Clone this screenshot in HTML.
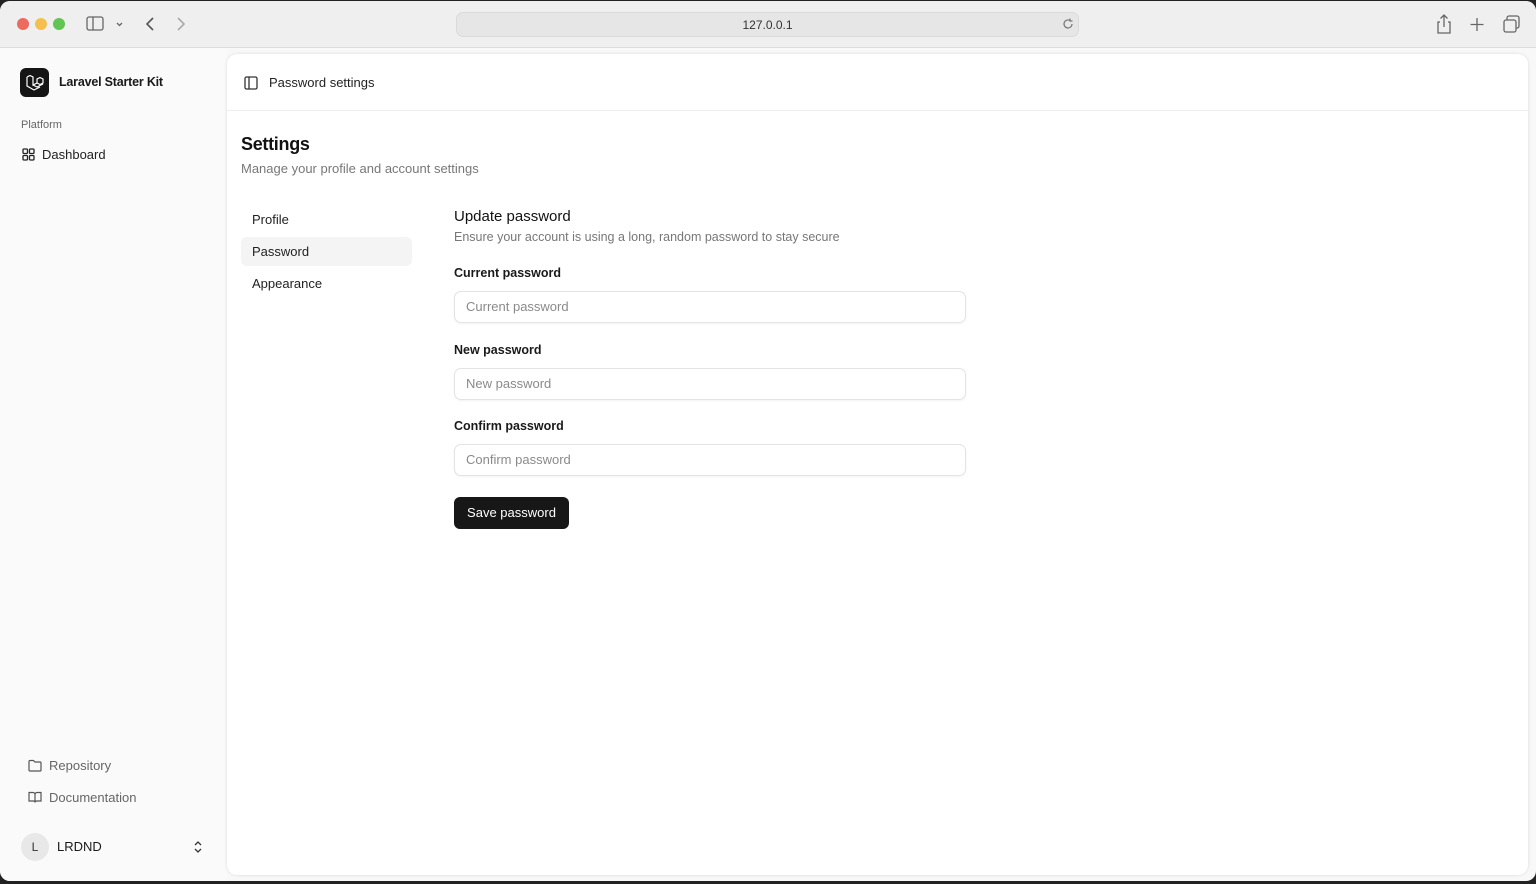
<!DOCTYPE html>
<html><head><style>
*{box-sizing:border-box;margin:0;padding:0}
body{width:1536px;height:884px;background:#222;font-family:"Liberation Sans",sans-serif;overflow:hidden;position:relative}
.win{position:absolute;left:0;top:1px;width:1536px;height:880px;background:#f8f8f8;border-radius:10px;overflow:hidden}
.chrome{position:absolute;left:0;top:0;width:100%;height:47px;background:#efefef;border-bottom:1px solid #dcdcdc}
.dot{position:absolute;top:17px;width:12px;height:12px;border-radius:50%}
.url{position:absolute;left:456px;top:11px;width:623px;height:25px;background:#e6e6e6;border:1px solid #dadada;border-radius:7px;text-align:center;font-size:12px;line-height:24px;color:#333}
.side{position:absolute;left:0;top:47px;width:227px;bottom:0;background:#fafafa}
.main{position:absolute;left:227px;top:53px;width:1301px;height:821px;background:#fff;border-radius:10px;box-shadow:0 0 3px rgba(0,0,0,.12)}
.t{position:absolute;white-space:nowrap}
.inp{position:absolute;left:227px;width:512px;height:32px;border:1px solid #e3e3e3;border-radius:7px;box-shadow:0 1px 2px rgba(0,0,0,.05);font-size:13px;color:#8a8a8a;padding-left:11px;line-height:30px}
.lbl{position:absolute;left:227px;font-size:12.5px;font-weight:bold;color:#1a1a1a}
</style></head><body>
<div class="win">
<div class="chrome">
<div class="dot" style="left:17px;background:#ed6a5e"></div>
<div class="dot" style="left:35px;background:#f5bf4f"></div>
<div class="dot" style="left:53px;background:#61c554"></div>
<svg style="position:absolute;left:86px;top:15px" width="40" height="16" fill="none" stroke="#666" stroke-width="1.3"><rect x="1" y="1" width="16" height="13" rx="2"/><line x1="7" y1="1" x2="7" y2="14"/><path d="M31 7l2.5 2.5L36 7"/></svg>
<svg style="position:absolute;left:143px;top:15px" width="45" height="16" fill="none" stroke="#555" stroke-width="1.6"><path d="M10 2L4 8l6 6"/><path d="M35 2l6 6-6 6" stroke="#aaa"/></svg>
<div class="url">127.0.0.1</div>
<svg style="position:absolute;left:1061px;top:16px" width="14" height="14" fill="none" stroke="#777" stroke-width="1.2"><path d="M11 7a4 4 0 1 1-2-3.5M9 1.5v2.5h2.5"/></svg>
<svg style="position:absolute;left:1435px;top:12px" width="90" height="22" fill="none" stroke="#666" stroke-width="1.3"><path d="M5 9H3v11h12V9h-2M9 14V2M5.5 5.5L9 2l3.5 3.5"/><path d="M42 5v13M35.5 11.5h13"/><rect x="69" y="7" width="12" height="12" rx="2"/><path d="M72 7V5a2 2 0 0 1 2-2h8a2 2 0 0 1 2 2v8a2 2 0 0 1-2 2h-1"/></svg>
</div>
<div class="side">
<div style="position:absolute;left:20px;top:20px;width:29px;height:29px;background:#151515;border-radius:6px"></div>
<svg style="position:absolute;left:25px;top:25px" width="19" height="19" fill="none" stroke="#fff" stroke-width="1.2"><path d="M2 4l3-1.5 3 1.5v8l4-2V6l3-1.5 3 1.5v4l-3 1.5-3-1.5M8 12l4 2 6-3M2 4v9l7 4 6-3"/></svg>
<div class="t" style="left:59px;top:27px;font-size:12.5px;font-weight:bold;color:#1a1a1a;letter-spacing:-0.2px">Laravel Starter Kit</div>
<div class="t" style="left:21px;top:71px;font-size:11px;color:#666">Platform</div>
<svg style="position:absolute;left:22px;top:100px" width="13" height="13" fill="none" stroke="#222" stroke-width="1.3"><rect x="1" y="1" width="4.5" height="4.5" rx="1"/><rect x="7.5" y="1" width="4.5" height="4.5" rx="1"/><rect x="1" y="7.5" width="4.5" height="4.5" rx="1"/><rect x="7.5" y="7.5" width="4.5" height="4.5" rx="1"/></svg>
<div class="t" style="left:42px;top:99px;font-size:13px;color:#222">Dashboard</div>
<svg style="position:absolute;left:28px;top:711px" width="14" height="13" fill="none" stroke="#555" stroke-width="1.2"><path d="M1 2.5a1 1 0 0 1 1-1h3.5l1.5 1.5h5a1 1 0 0 1 1 1v7a1 1 0 0 1-1 1H2a1 1 0 0 1-1-1z"/></svg>
<div class="t" style="left:49px;top:710px;font-size:13px;color:#666">Repository</div>
<svg style="position:absolute;left:28px;top:743px" width="14" height="13" fill="none" stroke="#555" stroke-width="1.2"><path d="M1 1.5h4a2 2 0 0 1 2 2v8a1.5 1.5 0 0 0-1.5-1.5H1zM13 1.5H9a2 2 0 0 0-2 2v8a1.5 1.5 0 0 1 1.5-1.5H13z"/></svg>
<div class="t" style="left:49px;top:742px;font-size:13px;color:#666">Documentation</div>
<div style="position:absolute;left:21px;top:785px;width:28px;height:28px;border-radius:50%;background:#e8e8e8;text-align:center;line-height:28px;font-size:12px;color:#333">L</div>
<div class="t" style="left:57px;top:791px;font-size:13px;color:#1a1a1a">LRDND</div>
<svg style="position:absolute;left:193px;top:792px" width="10" height="14" fill="none" stroke="#333" stroke-width="1.3"><path d="M2 5l3-3 3 3M2 9l3 3 3-3"/></svg>
</div>
<div class="main">
<svg style="position:absolute;left:17px;top:22px" width="14" height="14" fill="none" stroke="#333" stroke-width="1.3"><rect x="1" y="1" width="12" height="12" rx="1.5"/><line x1="5" y1="1" x2="5" y2="13"/></svg>
<div class="t" style="left:42px;top:21px;font-size:13px;color:#222">Password settings</div>
<div style="position:absolute;left:0;top:56px;width:100%;border-top:1px solid #eee"></div>
<div class="t" style="left:14px;top:80px;font-size:18px;font-weight:bold;color:#111;letter-spacing:-0.3px">Settings</div>
<div class="t" style="left:14px;top:107px;font-size:13px;color:#777">Manage your profile and account settings</div>
<div class="t" style="left:25px;top:158px;font-size:13px;color:#222">Profile</div>
<div style="position:absolute;left:14px;top:183px;width:171px;height:29px;background:#f4f4f4;border-radius:6px"></div>
<div class="t" style="left:25px;top:190px;font-size:13px;color:#222">Password</div>
<div class="t" style="left:25px;top:222px;font-size:13px;color:#222">Appearance</div>
<div class="t" style="left:227px;top:154px;font-size:15px;color:#111">Update password</div>
<div class="t" style="left:227px;top:176px;font-size:12.5px;color:#777">Ensure your account is using a long, random password to stay secure</div>
<div class="lbl" style="top:212px">Current password</div>
<div class="inp" style="top:237px">Current password</div>
<div class="lbl" style="top:289px">New password</div>
<div class="inp" style="top:314px">New password</div>
<div class="lbl" style="top:365px">Confirm password</div>
<div class="inp" style="top:390px">Confirm password</div>
<div style="position:absolute;left:227px;top:443px;width:115px;height:32px;background:#171717;border-radius:6px;color:#fff;font-size:13px;text-align:center;line-height:32px">Save password</div>
</div>
</div>
</body></html>
